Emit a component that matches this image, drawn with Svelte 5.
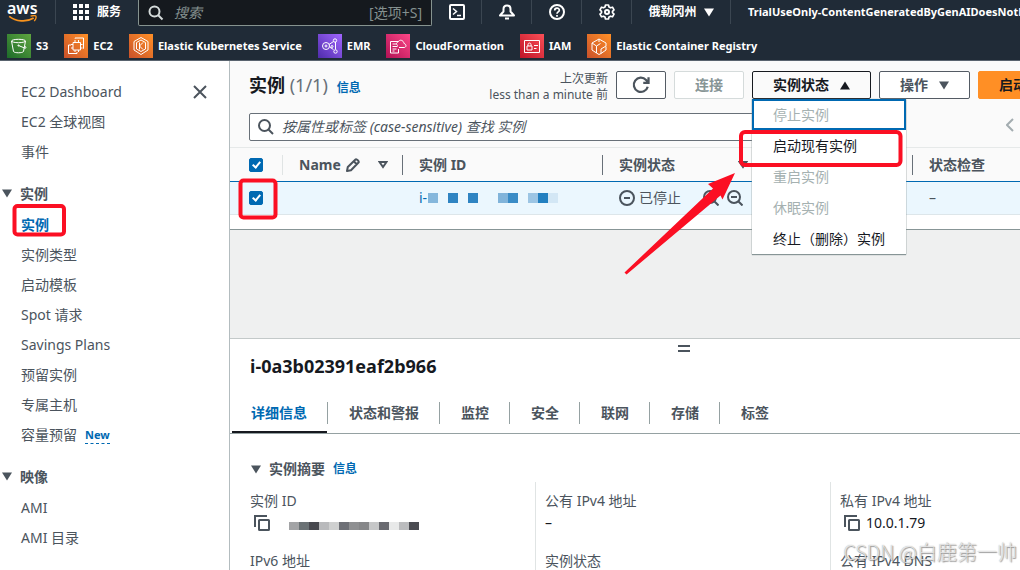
<script lang="ts">
  type NavLink = { label: string; badge?: string };

  const topLinks: NavLink[] = [{ label: 'EC2 Dashboard' }, { label: 'EC2 全球视图' }, { label: '事件' }];

  const sections: { title: string; links: NavLink[] }[] = [
    {
      title: '实例',
      links: [
        { label: '实例' },
        { label: '实例类型' },
        { label: '启动模板' },
        { label: 'Spot 请求' },
        { label: 'Savings Plans' },
        { label: '预留实例' },
        { label: '专属主机' },
        { label: '容量预留', badge: 'New' }
      ]
    },
    { title: '映像', links: [{ label: 'AMI' }, { label: 'AMI 目录' }] }
  ];

  const favorites = [
    { name: 'S3', icon: 's3' },
    { name: 'EC2', icon: 'ec2' },
    { name: 'Elastic Kubernetes Service', icon: 'eks' },
    { name: 'EMR', icon: 'emr' },
    { name: 'CloudFormation', icon: 'cfn' },
    { name: 'IAM', icon: 'iam' },
    { name: 'Elastic Container Registry', icon: 'ecr' }
  ];

  const stateActions = [
    { label: '停止实例', disabled: true },
    { label: '启动现有实例', disabled: false },
    { label: '重启实例', disabled: true },
    { label: '休眠实例', disabled: true },
    { label: '终止（删除）实例', disabled: false }
  ];

  const tabs = ['详细信息', '状态和警报', '监控', '安全', '联网', '存储', '标签'];

  const linkMask = [
    [0, '#85b7dc'], [20, '#2f84c2'], [40, '#2f84c2'], [70, '#81b4da'],
    [80, '#3a8cc6'], [100, '#9cc5e4'], [110, '#2380c0'], [120, '#d3e7f5']
  ] as const;
  const idMask = [
    '#a3a4a6', '#6b7275', '#48494f', '#b9babc', '#cfd0d0', '#6e7076', '#8f9092',
    '#868789', '#c6c7c8', '#696a70', '#e8e9e9', '#bbbcbe', '#4b4c52'
  ];

  let activeTab = $state('详细信息');
  let activeLink = $state('实例');
  let menuOpen = $state(true);
  let allSelected = $state(true);
  let rowSelected = $state(true);
</script>

{#snippet caret(up = false)}
  <svg viewBox="0 0 10 9" width="10" height="9" fill="currentColor" aria-hidden="true">
    {#if up}<path d="M5 0.5 10 8.5H0z" />{:else}<path d="M0 0.5h10L5 8.5z" />{/if}
  </svg>
{/snippet}

{#snippet copyIcon()}
  <svg viewBox="0 0 16 16" width="16" height="16" fill="none" stroke="currentColor" stroke-width="2" aria-hidden="true">
    <path d="M1 12V1h12" />
    <rect x="5" y="5" width="10" height="10" rx="0.5" />
  </svg>
{/snippet}

{#snippet lens(minus = true)}
  <svg viewBox="0 0 16 16" width="16" height="16" fill="none" stroke="currentColor" stroke-width="2" aria-hidden="true">
    <circle cx="7" cy="7" r="6" />
    <path d="m11 11 4.5 4.5" />
    <path d={minus ? 'M4 7h6' : 'M4 7h6M7 4v6'} />
  </svg>
{/snippet}

<div class="console">
  <header>
    <div class="global-bar">
      <a class="logo" href="#home" aria-label="aws">
        <span>aws</span>
        <svg viewBox="0 0 32 9" width="32" height="8" fill="none" stroke="#f8931d" stroke-width="2" aria-hidden="true">
          <path d="M0.5 1.5C8 7.5 20 8.500 28 3.500" />
          <path d="M24.500 1.300c3-.8 5.500-.8 6 0 .5 1-.2 3.500-1.800 5.500" stroke-width="1.500" />
        </svg>
      </a>
      <button class="services">
        <svg viewBox="0 0 16 16" width="16" height="16" fill="#fff" aria-hidden="true">
          {#each [0, 6, 12] as y}
            {#each [0, 6, 12] as x}<rect {x} {y} width="4" height="4" />{/each}
          {/each}
        </svg>
        服务
      </button>
      <label class="global-search">
        <svg viewBox="0 0 16 16" width="16" height="16" fill="none" stroke="#d5dbdb" stroke-width="2" aria-hidden="true">
          <circle cx="6.500" cy="6.500" r="5" />
          <path d="m10 10 4.500 4.500" />
        </svg>
        <input type="text" placeholder="搜索" aria-label="搜索" />
        <span>[选项+S]</span>
      </label>
      <button class="tool" aria-label="CloudShell">
        <svg viewBox="0 0 16 16" width="16" height="16" fill="none" stroke="#fff" stroke-width="2" aria-hidden="true">
          <rect x="1" y="1" width="14" height="14" rx="1" />
          <path d="m4 4.500 3.500 3L4 10.500M8 11.500h4" stroke-width="1.500" />
        </svg>
      </button>
      <button class="tool" aria-label="通知">
        <svg viewBox="0 0 16 16" width="16" height="16" fill="none" stroke="#fff" stroke-width="2" stroke-linejoin="round" aria-hidden="true">
          <path d="M1 11.500h14L11.500 7.500V5c0-2-1.500-3.500-3.500-3.500S4.500 3 4.500 5v2.500z" />
          <path d="M6 14.500h4" />
        </svg>
      </button>
      <button class="tool" aria-label="帮助">
        <svg viewBox="0 0 16 16" width="16" height="16" fill="none" stroke="#fff" stroke-width="2" aria-hidden="true">
          <circle cx="8" cy="8" r="7" />
          <path d="M5.700 6.500c0-3 4.600-3 4.600-.3C10.300 8 8 7.800 8 9.800M8 11v1.700" stroke-width="1.700" />
        </svg>
      </button>
      <button class="tool" aria-label="设置">
        <svg viewBox="0 0 16 16" width="16" height="16" fill="none" stroke="#fff" stroke-width="2" stroke-linejoin="round" aria-hidden="true">
          <path d="M6.500 1h3l.5 2 1.500.8 2-.6 1.500 2.600L13.500 7.300v1.400l1.500 1.500-1.500 2.600-2-.6-1.500.8-.5 2h-3l-.5-2-1.500-.8-2 .6L1 10.200l1.500-1.500V7.300L1 5.800l1.500-2.600 2 .6L6 3z" stroke-width="1.700" />
          <circle cx="8" cy="8" r="2" />
        </svg>
      </button>
      <button class="region">俄勒冈州 {@render caret()}</button>
      <button class="account">TrialUseOnly-ContentGeneratedByGenAIDoesNotR</button>
    </div>

    <nav class="favorites" aria-label="收藏夹">
      {#each favorites as fav}
        <a href="#{fav.icon}">
          <span class="service-icon {fav.icon}">
            <svg viewBox="0 0 24 24" width="24" height="24" fill="none" stroke="#fff" aria-hidden="true">
              {#if fav.icon === 's3'}
                <ellipse cx="11.500" cy="7" rx="7" ry="1.700" />
                <path d="m4.500 7 2 10.500c1 1.700 9 1.700 10 0l2-10.500M11.500 11.500l6 2.500c2 .5 2-.8.500-1.700" />
                <circle cx="11.500" cy="11.500" r=".6" />
              {:else if fav.icon === 'ec2'}
                <path d="M9 8.500h7.500V16H9zM11 6v2.500M14.500 6v2.500M11 16v2M14.500 16v2M7 10.500h2M7 14h2M16.500 10.500h2M16.500 14h2" />
                <path d="M11 4.500V4h8.500v10.500H19M7 11H4.500v8.500H13V18" />
              {:else if fav.icon === 'eks'}
                <path d="m12 3.500 7 4v8.500l-7 4.500-7-4.500V7.500z" />
                <path d="m12 6 4.500 2.500v6.500L12 17.500 7.500 15V8.500zM10.500 8.500v7M14 8.500l-3.500 3.500 3.500 3.500" />
              {:else if fav.icon === 'emr'}
                <circle cx="8" cy="12" r="3.500" />
                <path d="M8 10.500v3M6.500 12h3M11 10.500l4.500-3M11.500 13l4 2.500M17.500 8v7.500" />
                <circle cx="17" cy="6.500" r="1.700" />
                <circle cx="14" cy="12.500" r="1" />
                <circle cx="17.500" cy="17.500" r="1.700" />
              {:else if fav.icon === 'cfn'}
                <path d="M12 7.500H4.500v11.500h8v-4M6.500 10h4M6.500 12.500h5M6.500 15h4M6.500 17h2" />
                <path d="M13 13.500h5.500c2-.5 2-3.500-.5-4-.5-3.500-4.500-4.500-6-1.500-2 .5-2 3 0 3.500" />
              {:else if fav.icon === 'iam'}
                <path d="M4.500 6.500h15v12h-15zM7 12h5v4H7zM8 12v-1.500c0-2 3-2 3 0V12M14 11.500h4M14 14.500h2.500" />
              {:else}
                <path d="M9.500 19 5 16V9l7-4 7 4v3l-5 3v4.500l5-3.500v-3.500M9.500 19v-7l4-2.500M5 9l4.500 3M14 19.500l-2 1-2.500-1.500M12 5v3" />
              {/if}
            </svg>
          </span>
          {fav.name}
        </a>
      {/each}
    </nav>
  </header>

  <div class="body">
    <aside>
      <button class="close" aria-label="关闭">
        <svg viewBox="0 0 14 14" width="14" height="14" fill="none" stroke="currentColor" stroke-width="2" aria-hidden="true">
          <path d="m1 1 12 12M13 1 1 13" />
        </svg>
      </button>
      <nav aria-label="EC2">
        <ul>
          {#each topLinks as link}
            <li><a href="#nav">{link.label}</a></li>
          {/each}
        </ul>
        {#each sections as section}
          <h3>{@render caret()}{section.title}</h3>
          <ul>
            {#each section.links as link}
              <li>
                <a href="#nav" class:active={activeLink === link.label} onclick={() => (activeLink = link.label)}>{link.label}</a>
                {#if link.badge}<a class="badge" href="#new">{link.badge}</a>{/if}
              </li>
            {/each}
          </ul>
        {/each}
      </nav>
    </aside>

    <main>
      <section class="instances">
        <div class="title-row">
          <div class="title">
            <h1>实例 <span>(1/1)</span></h1>
            <a class="info" href="#info">信息</a>
          </div>
          <p class="updated">上次更新<br />less than a minute 前</p>
          <button class="btn refresh" aria-label="刷新">
            <svg viewBox="0 0 16 16" width="18" height="18" fill="none" stroke="currentColor" stroke-width="2" aria-hidden="true">
              <path d="M14 9.500A6.300 6.300 0 1 1 12.500 3.500L14.300 5.500M14.700 1v5H10" />
            </svg>
          </button>
          <button class="btn" disabled>连接</button>
          <div class="dropdown">
            <button class="btn open" aria-expanded={menuOpen} onclick={() => (menuOpen = !menuOpen)}>
              实例状态 {@render caret(true)}
            </button>
            {#if menuOpen}
              <div class="menu" role="menu">
                {#each stateActions as action, i}
                  <button role="menuitem" class:focused={i === 0} disabled={action.disabled}>{action.label}</button>
                {/each}
              </div>
            {/if}
          </div>
          <button class="btn">操作 {@render caret()}</button>
          <button class="btn primary">启动</button>
        </div>

        <div class="filter-row">
          <label class="filter">
            <svg viewBox="0 0 16 16" width="16" height="16" fill="none" stroke="currentColor" stroke-width="2" aria-hidden="true">
              <circle cx="6.500" cy="6.500" r="5.500" />
              <path d="m10.500 10.500 4.500 4.500" />
            </svg>
            <input type="text" placeholder="按属性或标签 (case-sensitive) 查找 实例" aria-label="查找实例" />
          </label>
          <div class="pager">
            <button aria-label="上一页">
              <svg viewBox="0 0 8 14" width="8" height="14" fill="none" stroke="currentColor" stroke-width="2" aria-hidden="true">
                <path d="M7 1 1 7l6 6" />
              </svg>
            </button>
          </div>
        </div>

        <table>
          <colgroup>
            <col class="c-select" /><col class="c-name" /><col class="c-id" />
            <col class="c-state" /><col class="c-type" /><col />
          </colgroup>
          <thead>
            <tr>
              <th><input type="checkbox" bind:checked={allSelected} aria-label="选择全部" /></th>
              <th>
                <div class="th light">
                  <span>Name</span>
                  <svg viewBox="0 0 14 14" width="14" height="14" fill="none" stroke="currentColor" stroke-width="2" stroke-linejoin="round" aria-hidden="true">
                    <path d="M1 13l.8-4L9.500 1.500c1-1 4 2 3 3L5 12.200zM8 3.500 10.500 6" />
                  </svg>
                  <svg class="sort" viewBox="0 0 10 8" width="10" height="8" fill="none" stroke="currentColor" stroke-width="2" aria-hidden="true">
                    <path d="M1.500 1h7L5 6z" />
                  </svg>
                </div>
              </th>
              <th><div class="th">实例 ID</div></th>
              <th>
                <div class="th tight">
                  实例状态
                  <svg class="sort" viewBox="0 0 10 8" width="10" height="8" fill="none" stroke="currentColor" stroke-width="2" aria-hidden="true">
                    <path d="M1.500 1h7L5 6z" />
                  </svg>
                </div>
              </th>
              <th></th>
              <th><div class="th">状态检查</div></th>
            </tr>
          </thead>
          <tbody>
            <tr>
              <td><input type="checkbox" bind:checked={rowSelected} aria-label="选择实例" /></td>
              <td></td>
              <td>
                <a class="cell" href="#instance">
                  i-
                  <svg viewBox="0 0 130 10" width="130" height="10" aria-hidden="true">
                    {#each linkMask as [x, fill]}<rect {x} y="0" width="10" height="10" {fill} />{/each}
                  </svg>
                </a>
              </td>
              <td>
                <div class="cell state">
                  <svg viewBox="0 0 16 16" width="16" height="16" fill="none" stroke="currentColor" stroke-width="2" aria-hidden="true">
                    <circle cx="8" cy="8" r="7" />
                    <path d="M5 8h6" />
                  </svg>
                  <span>已停止</span>
                  <button aria-label="包含">{@render lens(false)}</button>
                  <button aria-label="排除">{@render lens()}</button>
                </div>
              </td>
              <td></td>
              <td><div class="cell">–</div></td>
            </tr>
          </tbody>
        </table>
      </section>

      <section class="details">
        <button class="handle" aria-label="调整面板大小"></button>
        <h2>i-0a3b02391eaf2b966</h2>
        <div class="tabs" role="tablist">
          {#each tabs as tab}
            <button role="tab" aria-selected={activeTab === tab} class:active={activeTab === tab} onclick={() => (activeTab = tab)}>
              {tab}
            </button>
          {/each}
        </div>
        <div class="summary-title">
          {@render caret()}
          <h3>实例摘要</h3>
          <a class="info" href="#info">信息</a>
        </div>
        <div class="summary">
          <dl>
            <dt>实例 ID</dt>
            <dd class="with-copy">
              {@render copyIcon()}
              <svg class="mask" viewBox="0 0 130 8" width="130" height="8" aria-hidden="true">
                {#each idMask as fill, i}<rect x={i * 10} y="0" width="10" height="8" {fill} />{/each}
              </svg>
            </dd>
            <dt>IPv6 地址</dt>
          </dl>
          <dl>
            <dt>公有 IPv4 地址</dt>
            <dd>–</dd>
            <dt>实例状态</dt>
          </dl>
          <dl>
            <dt>私有 IPv4 地址</dt>
            <dd class="with-copy">{@render copyIcon()} 10.0.1.79</dd>
            <dt>公有 IPv4 DNS</dt>
          </dl>
        </div>
      </section>
    </main>
  </div>

  <!-- hand-drawn callouts on top of the console -->
  <svg class="callouts" viewBox="0 0 1020 570" width="1020" height="570" fill="none" stroke="#fb0f23" stroke-width="4" aria-hidden="true">
    <rect x="14.500" y="206" width="49.500" height="28.500" rx="3" />
    <rect x="240.500" y="180.500" width="35" height="37" rx="3" />
    <rect x="741" y="132" width="159.500" height="33" rx="4" />
    <path d="M735 173 708 184l5 4.500-88.500 84 2 2 94-79 2 4z" fill="#fb0f23" stroke="none" />
  </svg>
  <div class="watermark">CSDN @白鹿第一帅</div>
</div>

<style>
  :global(body) {
    margin: 0;
  }

  .console {
    position: relative;
    display: flex;
    flex-direction: column;
    height: 100vh;
    overflow: hidden;
    font-family: 'Noto Sans', 'Noto Sans CJK SC', sans-serif;
    font-size: 14px;
    line-height: 20px;
    color: #4b545d;
    background: #fff;
  }

  button,
  input {
    font: inherit;
    color: inherit;
    background: none;
    border: none;
    padding: 0;
    margin: 0;
  }

  button {
    cursor: pointer;
  }

  a {
    color: inherit;
    text-decoration: none;
  }

  svg {
    flex: none;
    display: block;
  }

  h1, h2, h3, p, ul, dl, dd {
    margin: 0;
    padding: 0;
  }

  header {
    flex: none;
    background: #202b37;
    border-bottom: 1px solid #59636e;
    color: #fff;
    font-size: 12px;
    font-weight: 700;
    white-space: nowrap;
  }

  .global-bar {
    display: flex;
    height: 27px;
  }

  .global-bar > * {
    flex: none;
    height: 24px;
  }

  .logo {
    display: flex;
    flex-direction: column;
    width: 48px;
    padding-left: 7px;
    border-right: 1px solid #3b4651;
  }

  .logo span {
    height: 15px;
    font-size: 16px;
    line-height: 17px;
    font-weight: 600;
  }

  .services {
    display: flex;
    align-items: center;
    gap: 8px;
    padding: 0 17px;
  }

  .global-bar .global-search {
    display: flex;
    align-items: center;
    gap: 10px;
    width: 294px;
    height: 26px;
    padding: 0 9px;
    box-sizing: border-box;
    border: 1px solid #86938f;
    border-top: none;
    border-radius: 0 0 2px 2px;
    background: #15191e;
    color: #84908f;
    font-size: 14px;
    font-weight: 400;
  }

  .global-search input {
    flex: 1;
    min-width: 0;
    outline: none;
  }

  input::placeholder {
    color: inherit;
    font-style: italic;
    opacity: 1;
  }

  .tool,
  .region {
    display: flex;
    align-items: center;
    justify-content: center;
    width: 50px;
    border-right: 1px solid #3b4651;
    box-sizing: border-box;
  }

  .region {
    gap: 7px;
    width: 99px;
  }

  .account {
    padding-left: 17px;
    font-size: 11px;
  }

  .favorites {
    display: flex;
    gap: 16px;
    padding: 7px 7px 2px;
    font-size: 11px;
  }

  .favorites a {
    display: flex;
    align-items: center;
    gap: 5px;
  }

  .service-icon {
    background: linear-gradient(45deg, #c9512a, #ff9027);
  }

  .service-icon.s3 {
    background: linear-gradient(45deg, #1d6b2a, #5fa53f);
  }

  .service-icon.emr {
    background: linear-gradient(45deg, #4f2cab, #a166ff);
  }

  .service-icon.cfn {
    background: linear-gradient(45deg, #b21255, #fd4788);
  }

  .service-icon.iam {
    background: linear-gradient(45deg, #be1427, #fb4f57);
  }

  .body {
    display: flex;
    flex: 1;
    min-height: 0;
  }

  aside {
    position: relative;
    flex: none;
    width: 229px;
    padding-top: 16px;
    border-right: 1px solid #b3bcbf;
  }

  .close {
    position: absolute;
    top: 24px;
    right: 22px;
  }

  aside ul {
    list-style: none;
    padding-left: 21px;
  }

  aside li {
    display: flex;
    align-items: center;
    gap: 8px;
    height: 30px;
  }

  aside h3 {
    display: flex;
    align-items: center;
    gap: 8px;
    height: 29px;
    margin-top: 12px;
    padding: 0 0 2px 2px;
    font-size: 14px;
  }

  .active {
    color: #0069b2;
    font-weight: 700;
  }

  .badge,
  .info {
    color: #0069b2;
    font-size: 12px;
    font-weight: 700;
  }

  .badge {
    font-size: 11px;
    line-height: 16px;
    border-bottom: 1px dashed #0069b2;
  }

  main {
    display: flex;
    flex-direction: column;
    flex: 1;
    min-width: 908px;
    background: #eff0f0;
  }

  .instances {
    background: #fff;
    padding-bottom: 14px;
    border-bottom: 1px solid #879596;
  }

  .title-row,
  .filter-row {
    display: flex;
    align-items: center;
    padding: 0 20px 0 19px;
    background: #fafafa;
    white-space: nowrap;
  }

  .title-row {
    gap: 8px;
    padding-top: 10px;
    padding-bottom: 14px;
  }

  .title {
    display: flex;
    align-items: baseline;
    gap: 9px;
  }

  h1,
  h2 {
    font-size: 18px;
    line-height: 24px;
    color: #16191f;
  }

  h1 span {
    font-weight: 400;
    color: #687078;
  }

  .updated {
    flex: 1;
    align-self: flex-start;
    height: 28px;
    font-size: 12px;
    line-height: 16px;
    text-align: right;
  }

  .btn {
    display: flex;
    align-items: center;
    gap: 11px;
    height: 28px;
    padding: 0 20px;
    box-sizing: border-box;
    border: 1px solid #545b64;
    border-radius: 2px;
    background: #fff;
    font-weight: 700;
  }

  .btn:disabled {
    border-color: #d5dbdb;
    color: #879596;
  }

  .btn.refresh {
    padding: 0 15px;
  }

  .btn.open {
    border-color: #16191f;
    background: #fafafa;
    color: #16191f;
  }

  .btn.primary {
    width: 140px;
    border-color: #ff8f25;
    background: #ff8f25;
    color: #16191f;
  }

  .dropdown {
    position: relative;
  }

  .menu {
    position: absolute;
    top: 28px;
    left: 0;
    z-index: 2;
    background: #fff;
    box-shadow: 0 1px 1px 0 #879596, 0 0 1px 0 #879596;
  }

  .menu button {
    display: block;
    width: 100%;
    height: 31px;
    padding: 0 19px;
    border: 2px solid transparent;
    color: #16191f;
    text-align: left;
  }

  .menu button:disabled {
    color: #a5b1b1;
  }

  .menu .focused {
    border-color: #0069b2;
  }

  .filter-row {
    gap: 20px;
    padding-bottom: 6px;
  }

  .filter {
    display: flex;
    align-items: center;
    flex: 1;
    gap: 8px;
    height: 28px;
    margin-right: 110px;
    padding: 0 8px;
    box-sizing: border-box;
    border: 1px solid #687078;
    border-radius: 2px;
    background: #fff;
  }

  .filter input {
    flex: 1;
    outline: none;
  }

  .pager {
    width: 112px;
    color: #a3acb0;
  }

  table {
    width: 100%;
    table-layout: fixed;
    border-collapse: collapse;
  }

  .c-select { width: 52px; }
  .c-name { width: 120px; }
  .c-id { width: 200px; }
  .c-state { width: 150px; }
  .c-type { width: 160px; }

  th,
  td {
    height: 32px;
    padding: 0;
    text-align: left;
  }

  th {
    height: 33px;
    background: #fafafa;
    border-top: 1px solid #e6e9e9;
  }

  th:first-child,
  td:first-child {
    padding-left: 19px;
  }

  .th {
    display: flex;
    align-items: center;
    gap: 5px;
    height: 20px;
    padding: 0 14px 0 16px;
    border-left: 1px solid #687078;
  }

  .th.light {
    border-color: #e0e4e4;
  }

  .th.tight {
    padding-right: 4px;
  }

  .sort {
    margin-left: auto;
  }

  tbody td {
    background: #ebf7fe;
    border-top: 1px solid #0069b2;
    border-bottom: 1px solid #dde6ea;
  }

  .cell {
    display: flex;
    align-items: center;
    padding-left: 17px;
  }

  a.cell {
    gap: 1px;
    color: #0069b2;
  }

  .state {
    gap: 4px;
  }

  .state span {
    margin-right: 18px;
  }

  .state button + button {
    margin-left: 4px;
  }

  input[type='checkbox'] {
    appearance: none;
    display: block;
    position: relative;
    width: 14px;
    height: 14px;
    border: 1px solid #687078;
    border-radius: 2px;
    background: #fff;
  }

  input[type='checkbox']:checked {
    border-color: #0069b2;
    background: #0069b2;
  }

  input[type='checkbox']:checked::after {
    content: '';
    position: absolute;
    top: 1px;
    left: 4px;
    width: 3px;
    height: 6px;
    border: solid #fff;
    border-width: 0 2px 2px 0;
    transform: rotate(40deg);
  }

  .details {
    margin-top: auto;
    height: 232px;
    background: #fff;
    border-top: 1px solid #c3c9c9;
    box-sizing: border-box;
  }

  .handle {
    display: block;
    width: 12px;
    height: 7px;
    margin: 6px auto 0;
    box-sizing: border-box;
    border: solid #4b545d;
    border-width: 2px 0;
  }

  h2 {
    margin: 2px 20px 0;
  }

  .tabs {
    display: flex;
    align-items: flex-end;
    height: 56px;
    padding-bottom: 9px;
    box-sizing: border-box;
    border-bottom: 1px solid #95a1a2;
    font-weight: 700;
  }

  .tabs button {
    position: relative;
    height: 22px;
    padding: 0 20px 0 21px;
    border-right: 1px solid #95a1a2;
  }

  .tabs button:last-child {
    border-right: none;
  }

  .tabs .active::after {
    content: '';
    position: absolute;
    right: 0;
    bottom: -9px;
    left: 2px;
    height: 2px;
    background: #16191f;
  }

  .summary-title {
    display: flex;
    align-items: center;
    gap: 8px;
    padding: 25px 21px 3px;
  }

  .summary-title h3 {
    font-size: 14px;
  }

  .summary {
    display: grid;
    grid-template-columns: repeat(3, 1fr);
    gap: 7px;
    padding: 0 20px 0 10px;
  }

  dl {
    padding: 8px 0 0 9px;
    border-left: 1px solid #e0e4e4;
  }

  dl:first-child {
    border-color: transparent;
  }

  dt {
    height: 22px;
    line-height: 22px;
  }

  dd {
    height: 22px;
    margin-bottom: 16px;
    line-height: 22px;
    color: #16191f;
  }

  .with-copy {
    display: flex;
    align-items: center;
    gap: 6px;
    padding-left: 4px;
  }

  .with-copy svg {
    color: #4b545d;
  }

  .with-copy .mask {
    margin: 5px 0 0 13px;
  }

  .callouts {
    position: absolute;
    top: 0;
    left: 0;
    z-index: 3;
    pointer-events: none;
  }

  .watermark {
    position: absolute;
    right: 3px;
    bottom: 6px;
    z-index: 4;
    font-family: 'Noto Sans CJK SC', sans-serif;
    font-size: 20px;
    line-height: 24px;
    font-weight: 300;
    color: rgba(255, 255, 255, 0.7);
    text-shadow: 1px 1px 1px rgba(90, 90, 90, 0.6), 0 0 1px rgba(120, 120, 120, 0.7);
    pointer-events: none;
  }
</style>
